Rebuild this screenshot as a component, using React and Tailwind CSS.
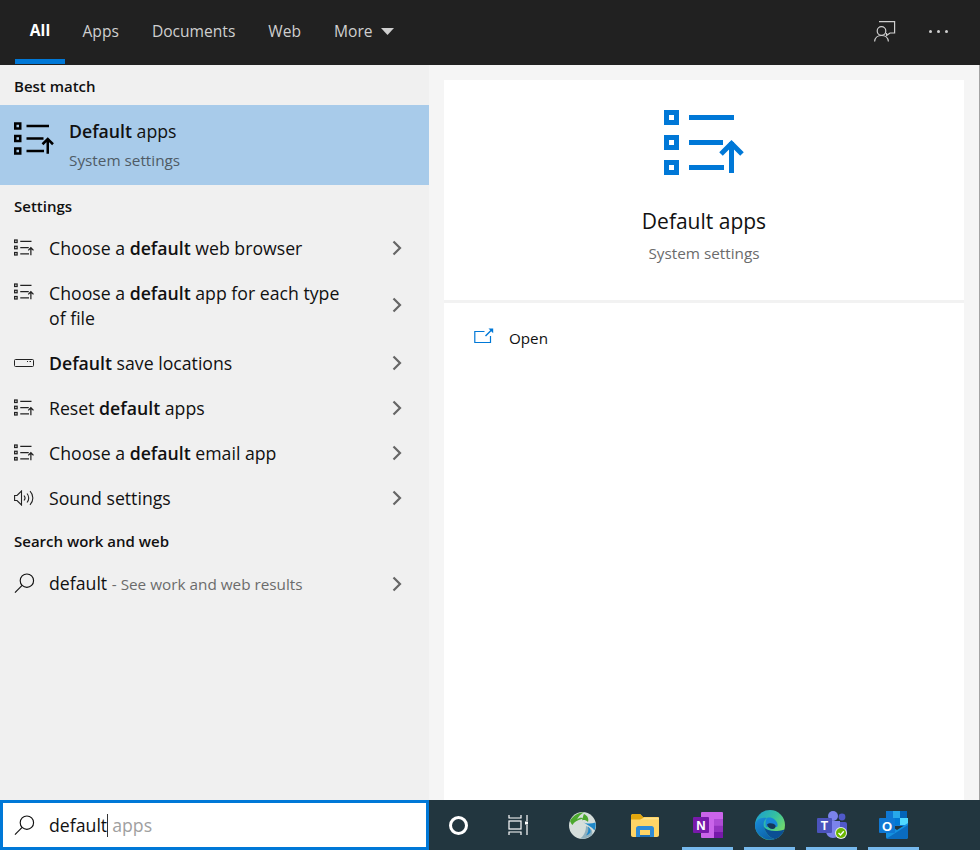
import React from "react";

const tabs = ["Apps", "Documents", "Web"];

// the "list with up arrow" settings glyph
const DefaultAppsIcon = ({ className, color = "#000" }) => (
  <svg viewBox="0 0 80 65" className={className} fill="none">
    <g stroke={color} strokeWidth="5">
      <rect x="2.5" y="2.5" width="10" height="10" />
      <rect x="2.5" y="27.5" width="10" height="10" />
      <rect x="2.5" y="52.5" width="10" height="10" />
      <path d="M25 7.5H70M25 32.5H59M25 57.5H60" />
      <path d="M67.5 63V32M57 44L67.5 33.5L78 44" />
    </g>
  </svg>
);

const SearchIcon = () => (
  <svg viewBox="0 0 22 22" className="w-[21px] h-[21px]" fill="none" stroke="#111" strokeWidth="1.2">
    <circle cx="13.5" cy="8" r="7" />
    <path d="M8.5 13L1 20.5" />
  </svg>
);

const SaveIcon = () => (
  <svg viewBox="0 0 20 8" className="w-[20px] h-[8px]" fill="none" stroke="#222" strokeWidth="1">
    <rect x="0.5" y="0.5" width="19" height="7" rx="1" />
    <path d="M13 2.5h1M15.5 2.5h1.5" />
  </svg>
);

const SoundIcon = () => (
  <svg viewBox="0 0 20 16" className="w-[20px] h-[16px]" fill="none" stroke="#222" strokeWidth="1.1">
    <path d="M0.6 5.5H3L7.5 1V15L3 10.5H0.6Z" />
    <path d="M10 5.5C11.3 7 11.3 9 10 10.5M13 3.5C15.3 6 15.3 10 13 12.5M16 1.2C19.8 5 19.8 11 16 14.8" />
  </svg>
);

const Chevron = () => (
  <svg viewBox="0 0 10 16" className="w-[10px] h-[16px]" fill="none" stroke="#666" strokeWidth="2.2">
    <path d="M1.5 1.5L8 8L1.5 14.5" />
  </svg>
);

const GlobeIcon = () => (
  <svg viewBox="0 0 27 27" className="w-[27px] h-[27px]">
    <circle cx="13.5" cy="13.5" r="13.5" fill="#d5dedb" />
    <path d="M17 14C22 16 25 19 22.5 23.5C19 26 15 27 11 26.5C15 24 17 19 17 14Z" fill="#8fb0bd" />
    <path d="M1 9C4 3.5 9 .5 15 .2C12 2 9.5 4 8 7.5C10 5.5 13 5 15 6.5C11 7 6 9 3.5 13C2.5 12 1.5 10.5 1 9Z" fill="#4ba82e" />
    <path d="M15 2C19 4 20 7 19 10C17 8 14.5 7.5 13 8.5C14 5.5 14 3.5 15 2Z" fill="#4ba82e" />
    <path d="M14 10C17 12 22 12 26.5 10.5C27 13 26.5 16 25.5 18.5C23 15 18 13 14 10Z" fill="#1e88c9" />
    <path d="M19 14.5C21 16 22 18 21.5 20.5C20 22 18.5 23 17 23.5C19 21 20 18 19 14.5Z" fill="#1e88c9" />
  </svg>
);

const FolderIcon = () => (
  <svg viewBox="0 0 28 23" className="w-[28px] h-[23px]">
    <path d="M0 2C0 1 .7 0 2 0H9L12 3H27C27.6 3 28 3.4 28 4V21C28 22 27.2 23 26 23H2C.8 23 0 22 0 21Z" fill="#ffd566" />
    <path d="M0 2C0 1 .7 0 2 0H9L13 4L9 5.5H0Z" fill="#e3a70e" />
    <path d="M0 5.5H9L13 4H28V5.5H0Z" fill="#ffe28a" />
    <path d="M5 23V14.5C5 13 6 12 7.5 12H20.5C22 12 23 13 23 14.5V23H19V16H9V23Z" fill="#2f8bd6" />
    <rect x="9" y="21" width="10" height="2" fill="#1e6fb3" />
  </svg>
);

const OneNoteIcon = () => (
  <svg viewBox="0 0 30 26" className="w-[30px] h-[26px]">
    <rect x="8" y="0" width="22" height="26" rx="1" fill="#ca64ea" />
    <rect x="21" y="7" width="9" height="6.5" fill="#ae4bd5" />
    <rect x="21" y="13.5" width="9" height="6.5" fill="#9332bf" />
    <rect x="21" y="20" width="9" height="6" fill="#7719aa" />
    <rect x="0" y="5" width="16" height="16" rx="1" fill="#7719aa" />
    <text x="8" y="18" textAnchor="middle" fontSize="13" fontWeight="700" fill="#fff" fontFamily="'Liberation Sans', sans-serif">
      N
    </text>
  </svg>
);

const EdgeIcon = () => (
  <svg viewBox="0 0 30 30" className="w-[30px] h-[30px]">
    <defs>
      <linearGradient id="edgeTop" x1="0" y1="0" x2="1" y2="0.7">
        <stop offset="0" stopColor="#1a9ad6" />
        <stop offset="0.55" stopColor="#35c1a0" />
        <stop offset="1" stopColor="#7fdc62" />
      </linearGradient>
      <linearGradient id="edgeLow" x1="0" y1="0" x2="0.6" y2="1">
        <stop offset="0" stopColor="#1b8fdc" />
        <stop offset="1" stopColor="#0c62a8" />
      </linearGradient>
    </defs>
    <circle cx="15" cy="15" r="15" fill="url(#edgeTop)" />
    <path d="M0 15C1 9 7 7 12 8C9 10 8 13 9 17C10.5 23 15 28 20 29.2C11 32 0 25 0 15Z" fill="url(#edgeLow)" />
    <path d="M12 8C16 6.5 21 9 22.5 14C22.7 15 22.6 16 22 17H11C10 14 10.5 10.5 12 8Z" fill="#1787d8" />
    <path d="M9 17C12 21 20 22.5 29.5 19.5C28 24 24.5 28 20 29.2C15 28 10.5 23 9 17Z" fill="#0b4f94" />
    <path d="M12 14.5C14 12.5 19 13 20.5 15.5C21 17 20 19 17.5 19C15 19 12.5 17 12 14.5Z" fill="#15375a" />
  </svg>
);

const TeamsIcon = () => (
  <svg viewBox="0 0 30 28" className="w-[30px] h-[28px]">
    <circle cx="16" cy="5" r="5" fill="#7b83eb" />
    <circle cx="25" cy="6" r="3.4" fill="#5059c9" />
    <rect x="20" y="11" width="10" height="11" rx="2" fill="#5059c9" />
    <path d="M9 10H23V20C23 24 20 27 16 27C12 27 9 24 9 20Z" fill="#7b83eb" />
    <rect x="0" y="7" width="15" height="15" rx="1" fill="#4b53bc" />
    <text x="7.5" y="19" textAnchor="middle" fontSize="12" fontWeight="700" fill="#fff" fontFamily="'Liberation Sans', sans-serif">
      T
    </text>
    <circle cx="24" cy="22" r="6" fill="#e8efe6" />
    <circle cx="24" cy="22" r="5" fill="#6bb700" />
    <path d="M21.5 22L23.5 24L26.8 20.3" fill="none" stroke="#fff" strokeWidth="1.4" />
  </svg>
);

const OutlookIcon = () => (
  <svg viewBox="0 0 29 28" className="w-[29px] h-[28px]">
    <rect x="7" y="0" width="21" height="15" fill="#0f78d4" />
    <rect x="14" y="0" width="7" height="7" fill="#28a8ea" />
    <rect x="21" y="0" width="7" height="7" fill="#0364b8" />
    <rect x="14" y="7" width="7" height="7" fill="#0078d4" />
    <rect x="21" y="7" width="8" height="7" fill="#50d9ff" />
    <path d="M7 12L18 19L29 12V26C29 27 28 28 27 28H9C8 28 7 27 7 26Z" fill="#1490df" />
    <path d="M7 28L29 14V26C29 27 28 28 27 28Z" fill="#0a6cc0" />
    <rect x="0" y="7" width="16" height="15" rx="1" fill="#0f78d4" />
    <text x="8" y="19.5" textAnchor="middle" fontSize="13" fontWeight="700" fill="#fff" fontFamily="'Liberation Sans', sans-serif">
      O
    </text>
  </svg>
);

const Row = ({ icon, h = "h-[45px]", children }) => (
  <div className={`flex ${h} items-center pl-[14px] pr-[27px] text-[17.7px] leading-[25px] text-[#111]`}>
    <div className="w-[35px] shrink-0 flex items-center">{icon}</div>
    <div className="flex-1">{children}</div>
    <Chevron />
  </div>
);

const SectionTitle = ({ className, children }) => (
  <div className={`pl-[14px] flex items-center text-[15px] font-semibold text-[#111] ${className}`}>{children}</div>
);

const smallIcon = <DefaultAppsIcon className="w-[20px] h-[17px]" color="#222" />;

const AppSlot = ({ children }) => (
  <div className="w-[51px] h-full flex items-center justify-center border-y-[3px] border-t-transparent border-b-[#76b9ed]">
    {children}
  </div>
);

const App = () => {
  return (
    <div className="w-[980px] h-[850px] overflow-hidden flex flex-col bg-[#f5f5f5] font-['Open_Sans','Noto_Sans',sans-serif]">
      {/* top tabs */}
      <div className="h-[65px] shrink-0 bg-[#212121] flex items-stretch pl-[15px] pr-[32px] text-[15.6px] text-[#cfcfcf]">
        <div className="w-[50px] mr-[1px] flex items-center justify-center font-bold text-white border-b-[5px] border-[#0078d7] pt-[3px] mb-[1px]">
          All
        </div>
        {tabs.map((t) => (
          <div key={t} className="px-[16.5px] pb-[2px] flex items-center">
            {t}
          </div>
        ))}
        <div className="px-[16.5px] pb-[2px] flex items-center gap-[8px]">
          More
          <svg viewBox="0 0 13 7" className="w-[13px] h-[7px]">
            <path d="M0 0H13L6.5 7Z" fill="#cfcfcf" />
          </svg>
        </div>
        <div className="ml-auto pb-[2px] flex items-center gap-[33px]">
          <svg viewBox="0 0 22 21" className="w-[22px] h-[21px] -ml-[1px]" fill="none" stroke="#cfcfcf" strokeWidth="1.2">
            <path d="M5 .6H20.6V12H16L12.5 14.5V12" />
            <circle cx="7.5" cy="10" r="4.3" />
            <path d="M.6 20.5C1 16.5 3.5 14.5 7.5 14.5C11.5 14.5 14 16.5 14.4 20.5" />
          </svg>
          <div className="flex gap-[5px]">
            <div className="w-[3px] h-[3px] rounded-full bg-[#cfcfcf]" />
            <div className="w-[3px] h-[3px] rounded-full bg-[#cfcfcf]" />
            <div className="w-[3px] h-[3px] rounded-full bg-[#cfcfcf]" />
          </div>
        </div>
      </div>

      <div className="flex flex-1 min-h-0">
        {/* results list */}
        <div className="w-[429px] shrink-0 bg-[#f0f0f0]">
          <SectionTitle className="h-[40px] pt-[3px]">Best match</SectionTitle>
          <div className="h-[80px] bg-[#a8cbea] flex items-center pl-[14px]">
            <DefaultAppsIcon className="w-[40px] h-[33px] -mt-[13px]" />
            <div className="ml-[15px]">
              <div className="text-[17.7px] leading-[24px] text-[#111] -mt-[1px]">
                <b className="font-semibold">Default</b> apps
              </div>
              <div className="text-[15.3px] leading-[20px] mt-[7px] text-[#4f5b66]">System settings</div>
            </div>
          </div>
          <SectionTitle className="h-[40px] pt-[2px]">Settings</SectionTitle>
          <Row icon={smallIcon}>
            <div className="pt-[2px]">
              Choose a <b className="font-semibold">default</b> web browser
            </div>
          </Row>
          <Row h="h-[70px]" icon={<div className="-mt-[28px]">{smallIcon}</div>}>
            <div className="pt-[2px]">
              Choose a <b className="font-semibold">default</b> app for each type
              <br />
              of file
            </div>
          </Row>
          <Row icon={<SaveIcon />}>
            <div className="pt-[2px]">
              <b className="font-semibold">Default</b> save locations
            </div>
          </Row>
          <Row icon={smallIcon}>
            <div className="pt-[2px]">
              Reset <b className="font-semibold">default</b> apps
            </div>
          </Row>
          <Row icon={smallIcon}>
            <div className="pt-[2px]">
              Choose a <b className="font-semibold">default</b> email app
            </div>
          </Row>
          <Row icon={<SoundIcon />}>
            <div className="pt-[2px]">Sound settings</div>
          </Row>
          <SectionTitle className="h-[41px] pt-[1px]">Search work and web</SectionTitle>
          <Row icon={<SearchIcon />}>
            default <span className="text-[15.3px] text-[#6b6b6b]">- See work and web results</span>
          </Row>
        </div>

        {/* preview pane */}
        <div className="flex-1 pt-[15px] pl-[15px] pr-[15px] border-r border-[#a3a3a3]">
          <div className="bg-white h-full">
            <div className="h-[220px] flex flex-col items-center">
              <DefaultAppsIcon className="w-[80px] h-[65px] mt-[30px]" color="#0078d7" />
              <div className="text-[21px] leading-[28px] text-[#111] mt-[32px]">Default apps</div>
              <div className="text-[15.3px] leading-[20px] text-[#6b6b6b] mt-[8px]">System settings</div>
            </div>
            <div className="h-[3px] bg-[#f2f2f2]" />
            <div className="flex items-center h-[70px] pl-[30px] text-[15.2px] text-[#111]">
              <svg viewBox="0 0 20 16" className="w-[20px] h-[16px] mr-[15px] -mt-[5px]" fill="none" stroke="#0078d7" strokeWidth="1.2">
                <path d="M16.5 8V14.5H.8V3.5H10.5" />
                <path d="M11.5 8L17.5 2" strokeWidth="1.4" />
                <path d="M14.5 .6H19.2V5.3Z" fill="#0078d7" stroke="none" />
              </svg>
              Open
            </div>
          </div>
        </div>
      </div>

      {/* search box and taskbar */}
      <div className="h-[50px] shrink-0 flex">
        <div className="w-[429px] shrink-0 border-[3px] border-[#0078d7] bg-white flex items-center pl-[11px] text-[17.7px] text-[#111]">
          <SearchIcon />
          <span className="ml-[14px]">default</span>
          <span className="w-[1px] h-[23px] bg-[#333]" />
          <span className="text-[#a0a0a0] ml-[4px]">apps</span>
        </div>
        <div className="flex-1 bg-[#22363f] flex items-center pl-[20px]">
          <div className="w-[19px] h-[19px] rounded-full border-[3px] border-white" />
          <svg viewBox="0 0 20 20" className="w-[20px] h-[20px] ml-[40px]" fill="none" stroke="#fff" strokeWidth="1.2">
            <path d="M1 0V3H13V0M1 20V17H13V20" />
            <rect x="1" y="6" width="12" height="8" />
            <path d="M19 0V6M19 10V20" />
            <rect x="17" y="6.5" width="3" height="3" fill="#fff" stroke="none" />
          </svg>
          <div className="ml-[41px]">
            <GlobeIcon />
          </div>
          <div className="ml-[35px]">
            <FolderIcon />
          </div>
          <div className="ml-[23px] h-full flex gap-[11px]">
            <AppSlot>
              <OneNoteIcon />
            </AppSlot>
            <AppSlot>
              <EdgeIcon />
            </AppSlot>
            <AppSlot>
              <TeamsIcon />
            </AppSlot>
            <AppSlot>
              <OutlookIcon />
            </AppSlot>
          </div>
        </div>
      </div>
    </div>
  );
};

export default App;
